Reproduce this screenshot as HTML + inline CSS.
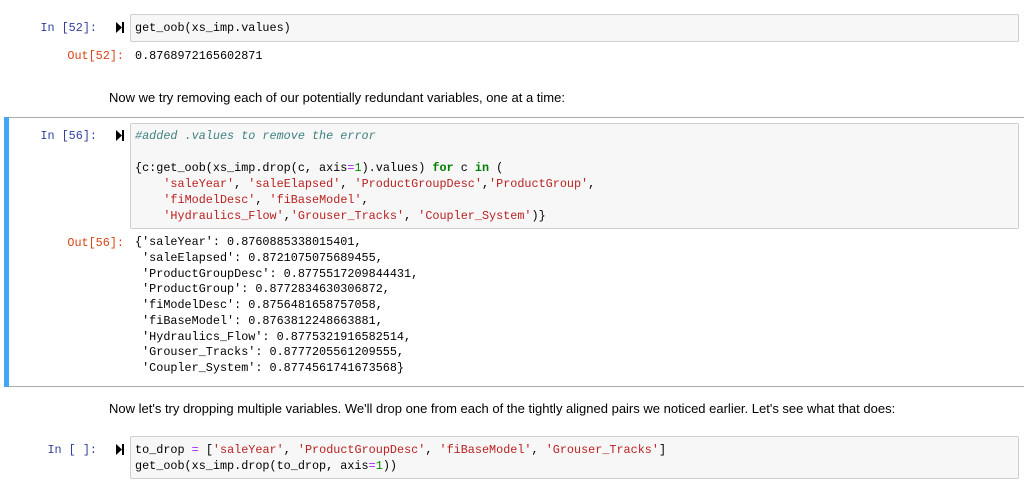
<!DOCTYPE html>
<html><head><style>
body{margin:0;width:1024px;height:482px;background:#fff;position:relative;overflow:hidden;font-family:"Liberation Sans",sans-serif}
.m{font-family:"Liberation Mono",monospace;font-size:11.8px;line-height:16px;white-space:pre;position:absolute}
.p{color:#303f9f;text-align:right;width:97px;left:0}
.o{color:#d84315;text-align:right;width:124px;left:0}
.box{position:absolute;left:130px;width:887px;background:#f7f7f7;border:1px solid #cfcfcf;border-radius:2px}
.arr{position:absolute;left:116px;width:8px;height:11px}
.t{position:absolute;left:109px;font-size:13px;color:#000}
.s{color:#ba2121}.k{color:#008000;font-weight:bold}.n{color:#080}.c{color:#408080;font-style:italic}.op{color:#aa22ff}
</style></head><body>
<div class="box" style="top:14px;height:26px"></div>
<svg class="arr" style="top:22px" viewBox="0 0 8 11"><path d="M0 0L6 5.5L0 11Z" fill="#000"/><rect x="6" y="0" width="2" height="11" fill="#000"/></svg>
<div class="m p" style="top:20px">In [52]:</div>
<div class="m" style="left:135px;top:20px">get_oob(xs_imp.values)</div>
<div class="m o" style="top:48px">Out[52]:</div>
<div class="m" style="left:135px;top:48px">0.8768972165602871</div>
<div class="t" style="top:90px">Now we try removing each of our potentially redundant variables, one at a time:</div>

<div style="position:absolute;left:4px;top:117px;width:1030px;height:268px;border:1px solid #ababab;border-left:none"></div>
<div style="position:absolute;left:4px;top:117px;width:5px;height:270px;background:#42a5f5"></div>
<div class="box" style="top:123px;height:104px"></div>
<svg class="arr" style="top:130px" viewBox="0 0 8 11"><path d="M0 0L6 5.5L0 11Z" fill="#000"/><rect x="6" y="0" width="2" height="11" fill="#000"/></svg>
<div class="m p" style="top:128px">In [56]:</div>
<div class="m" style="left:135px;top:128px"><span class="c">#added .values to remove the error</span>

{c:get_oob(xs_imp.drop(c, axis<span class="op">=</span><span class="n">1</span>).values) <span class="k">for</span> c <span class="k">in</span> (
    <span class="s">'saleYear'</span>, <span class="s">'saleElapsed'</span>, <span class="s">'ProductGroupDesc'</span>,<span class="s">'ProductGroup'</span>,
    <span class="s">'fiModelDesc'</span>, <span class="s">'fiBaseModel'</span>,
    <span class="s">'Hydraulics_Flow'</span>,<span class="s">'Grouser_Tracks'</span>, <span class="s">'Coupler_System'</span>)}</div>
<div class="m o" style="top:235px">Out[56]:</div>
<div class="m" style="left:135px;top:235px;line-height:15.75px">{'saleYear': 0.8760885338015401,
 'saleElapsed': 0.8721075075689455,
 'ProductGroupDesc': 0.8775517209844431,
 'ProductGroup': 0.8772834630306872,
 'fiModelDesc': 0.8756481658757058,
 'fiBaseModel': 0.8763812248663881,
 'Hydraulics_Flow': 0.8775321916582514,
 'Grouser_Tracks': 0.8777205561209555,
 'Coupler_System': 0.8774561741673568}</div>
<div class="t" style="top:401px">Now let's try dropping multiple variables. We'll drop one from each of the tightly aligned pairs we noticed earlier. Let's see what that does:</div>

<div class="box" style="top:436px;height:41px"></div>
<svg class="arr" style="top:444px" viewBox="0 0 8 11"><path d="M0 0L6 5.5L0 11Z" fill="#000"/><rect x="6" y="0" width="2" height="11" fill="#000"/></svg>
<div class="m p" style="top:442px">In [ ]:</div>
<div class="m" style="left:135px;top:442px">to_drop <span class="op">=</span> [<span class="s">'saleYear'</span>, <span class="s">'ProductGroupDesc'</span>, <span class="s">'fiBaseModel'</span>, <span class="s">'Grouser_Tracks'</span>]
get_oob(xs_imp.drop(to_drop, axis<span class="op">=</span><span class="n">1</span>))</div>
</body></html>
